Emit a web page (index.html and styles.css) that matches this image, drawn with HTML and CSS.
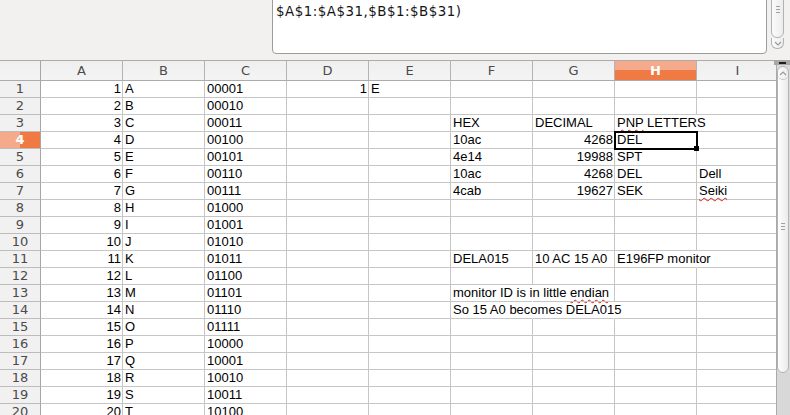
FILE: index.html
```html
<!DOCTYPE html>
<html>
<head>
<meta charset="utf-8">
<link rel="stylesheet" href="styles.css">
</head>
<body>
<div class="topbar">
  <div class="fbox"><div class="fline">$A$1:$A$31,$B$1:$B$31)</div></div>
  <div class="fscroll">
    <div class="fthumb"><span class="grip"><i></i><i></i><i></i></span></div>
    <div class="fdown"><svg width="8" height="5" viewBox="0 0 8 5"><path d="M1 1 L4 4 L7 1" fill="none" stroke="#9a9a9a" stroke-width="1.2"/></svg></div>
  </div>
</div>
<div class="sheet">
  <div class="grid">
    <div class="hrow">
      <div class="ch corner"></div><div class="ch">A</div><div class="ch">B</div><div class="ch">C</div><div class="ch">D</div><div class="ch">E</div><div class="ch">F</div><div class="ch">G</div><div class="ch hsel">H</div><div class="ch">I</div>
    </div>
    <div class="row"><div class="rh">1</div><div class="c n">1</div><div class="c">A</div><div class="c">00001</div><div class="c n">1</div><div class="c">E</div><div class="c"></div><div class="c"></div><div class="c"></div><div class="c"></div></div>
    <div class="row"><div class="rh">2</div><div class="c n">2</div><div class="c">B</div><div class="c">00010</div><div class="c"></div><div class="c"></div><div class="c"></div><div class="c"></div><div class="c"></div><div class="c"></div></div>
    <div class="row"><div class="rh">3</div><div class="c n">3</div><div class="c">C</div><div class="c">00011</div><div class="c"></div><div class="c"></div><div class="c">HEX</div><div class="c">DECIMAL</div><div class="c spill"><span class="spell">PNP</span> LETTERS</div><div class="c"></div></div>
    <div class="row"><div class="rh rsel">4</div><div class="c n">4</div><div class="c">D</div><div class="c">00100</div><div class="c"></div><div class="c"></div><div class="c">10ac</div><div class="c n">4268</div><div class="c cur">DEL</div><div class="c"></div></div>
    <div class="row"><div class="rh">5</div><div class="c n">5</div><div class="c">E</div><div class="c">00101</div><div class="c"></div><div class="c"></div><div class="c">4e14</div><div class="c n">19988</div><div class="c">SPT</div><div class="c"></div></div>
    <div class="row"><div class="rh">6</div><div class="c n">6</div><div class="c">F</div><div class="c">00110</div><div class="c"></div><div class="c"></div><div class="c">10ac</div><div class="c n">4268</div><div class="c">DEL</div><div class="c">Dell</div></div>
    <div class="row"><div class="rh">7</div><div class="c n">7</div><div class="c">G</div><div class="c">00111</div><div class="c"></div><div class="c"></div><div class="c">4cab</div><div class="c n">19627</div><div class="c">SEK</div><div class="c"><span class="spell">Seiki</span></div></div>
    <div class="row"><div class="rh">8</div><div class="c n">8</div><div class="c">H</div><div class="c">01000</div><div class="c"></div><div class="c"></div><div class="c"></div><div class="c"></div><div class="c"></div><div class="c"></div></div>
    <div class="row"><div class="rh">9</div><div class="c n">9</div><div class="c">I</div><div class="c">01001</div><div class="c"></div><div class="c"></div><div class="c"></div><div class="c"></div><div class="c"></div><div class="c"></div></div>
    <div class="row"><div class="rh">10</div><div class="c n">10</div><div class="c">J</div><div class="c">01010</div><div class="c"></div><div class="c"></div><div class="c"></div><div class="c"></div><div class="c"></div><div class="c"></div></div>
    <div class="row"><div class="rh">11</div><div class="c n">11</div><div class="c">K</div><div class="c">01011</div><div class="c"></div><div class="c"></div><div class="c">DELA015</div><div class="c">10 AC 15 A0</div><div class="c spill">E196FP monitor</div><div class="c"></div></div>
    <div class="row"><div class="rh">12</div><div class="c n">12</div><div class="c">L</div><div class="c">01100</div><div class="c"></div><div class="c"></div><div class="c"></div><div class="c"></div><div class="c"></div><div class="c"></div></div>
    <div class="row"><div class="rh">13</div><div class="c n">13</div><div class="c">M</div><div class="c">01101</div><div class="c"></div><div class="c"></div><div class="c spill">monitor ID is in little <span class="spell">endian</span></div><div class="c"></div><div class="c"></div><div class="c"></div></div>
    <div class="row"><div class="rh">14</div><div class="c n">14</div><div class="c">N</div><div class="c">01110</div><div class="c"></div><div class="c"></div><div class="c spill">So 15 A0 becomes DELA015</div><div class="c spill"></div><div class="c"></div><div class="c"></div></div>
    <div class="row"><div class="rh">15</div><div class="c n">15</div><div class="c">O</div><div class="c">01111</div><div class="c"></div><div class="c"></div><div class="c"></div><div class="c"></div><div class="c"></div><div class="c"></div></div>
    <div class="row"><div class="rh">16</div><div class="c n">16</div><div class="c">P</div><div class="c">10000</div><div class="c"></div><div class="c"></div><div class="c"></div><div class="c"></div><div class="c"></div><div class="c"></div></div>
    <div class="row"><div class="rh">17</div><div class="c n">17</div><div class="c">Q</div><div class="c">10001</div><div class="c"></div><div class="c"></div><div class="c"></div><div class="c"></div><div class="c"></div><div class="c"></div></div>
    <div class="row"><div class="rh">18</div><div class="c n">18</div><div class="c">R</div><div class="c">10010</div><div class="c"></div><div class="c"></div><div class="c"></div><div class="c"></div><div class="c"></div><div class="c"></div></div>
    <div class="row"><div class="rh">19</div><div class="c n">19</div><div class="c">S</div><div class="c">10011</div><div class="c"></div><div class="c"></div><div class="c"></div><div class="c"></div><div class="c"></div><div class="c"></div></div>
    <div class="row"><div class="rh">20</div><div class="c n">20</div><div class="c">T</div><div class="c">10100</div><div class="c"></div><div class="c"></div><div class="c"></div><div class="c"></div><div class="c"></div><div class="c"></div></div>
  </div>
  <div class="vscroll">
    <div class="split"><span></span></div>
    <div class="vthumb">
      <div class="vup"><svg width="8" height="5" viewBox="0 0 8 5"><path d="M1 4 L4 1 L7 4" fill="none" stroke="#9a9a9a" stroke-width="1.2"/></svg></div>
      <div class="vbody"><span class="grip"><i></i><i></i><i></i></span></div>
    </div>
    <div class="trough"></div>
  </div>
</div>
</body>
</html>
```

FILE: styles.css
```css
* { box-sizing: border-box; }
html, body { margin: 0; padding: 0; }
body {
  width: 790px;
  height: 415px;
  overflow: hidden;
  background: #f2f1f0;
  font-family: "Liberation Sans", Arial, sans-serif;
}

/* top formula area */
.topbar {
  height: 60px;
  display: flex;
  align-items: flex-end;
  gap: 4px;
  padding-left: 272px;
  padding-bottom: 6px;
  overflow: hidden;
  background: #f2f1f0;
}
.fbox {
  width: 495px;
  height: 70px;
  flex: none;
  background: #ffffff;
  border: 1px solid #9c9c9c;
  border-radius: 0 0 4px 4px;
  padding: 18px 0 0 3px;
}
.fline {
  font-family: "DejaVu Sans", sans-serif;
  font-size: 13.4px;
  letter-spacing: 0.5px;
  line-height: 17px;
  color: #141414;
  white-space: nowrap;
}
.fscroll {
  width: 13px;
  height: 60px;
  flex: none;
  margin-bottom: -1px;
  display: flex;
  flex-direction: column;
}
.fthumb {
  height: 49px;
  margin-top: -6px;
  border: 1px solid #b3b3b3;
  border-radius: 0 0 6px 6px;
  background: linear-gradient(to right, #fbfbfb, #ececec);
  display: flex;
  justify-content: center;
  padding-top: 16px;
}
.fdown {
  height: 11px;
  border: 1px solid #b3b3b3;
  border-top: none;
  border-radius: 0 0 6px 6px;
  background: linear-gradient(to right, #fbfbfb, #ececec);
  display: flex;
  justify-content: center;
  align-items: center;
}
.grip {
  display: flex;
  flex-direction: column;
  gap: 2px;
  width: 4px;
}
.grip i {
  display: block;
  height: 1px;
  background: #a0a0a0;
}

/* sheet */
.sheet {
  display: flex;
  height: 355px;
}
.grid {
  width: 776px;
  flex: none;
  overflow: hidden;
  background: #ffffff;
}
.hrow, .row {
  display: grid;
  grid-template-columns: 41px repeat(9, 82px);
}
.hrow {
  height: 21px;
  border-top: 1px solid #ababab;
}
.ch {
  background: linear-gradient(#efefef, #f4f4f4);
  border-right: 1px solid #b3b3b3;
  border-bottom: 1px solid #ababab;
  text-align: center;
  font-family: "DejaVu Sans", sans-serif;
  font-size: 13px;
  line-height: 19px;
  color: #4b4b4b;
}
.ch.corner { border-right-color: #a6a6a6; }
.ch.hsel {
  background: linear-gradient(#f5aa8b 0, #f5aa8b 48%, #ef7a43 48%, #ef7a43 100%);
  color: #ffffff;
  font-weight: bold;
}
.row { height: 17px; }
.rh {
  background: #f1f1f1;
  border-right: 1px solid #a6a6a6;
  border-bottom: 1px solid #bdbdbd;
  text-align: center;
  font-family: "DejaVu Sans", sans-serif;
  font-size: 13px;
  line-height: 16px;
  color: #4b4b4b;
}
.rh.rsel {
  background: linear-gradient(to right, #f5aa8b 0, #f5aa8b 50%, #ef7a43 50%, #ef7a43 100%);
  color: #ffffff;
  font-weight: bold;
}
.c {
  border-right: 1px solid #c6c6c6;
  border-bottom: 1px solid #c6c6c6;
  font-family: "Liberation Sans", Arial, sans-serif;
  font-size: 13px;
  line-height: 16px;
  color: #000000;
  padding: 0 1px 0 2px;
  white-space: nowrap;
  overflow: visible;
}
.c.n { text-align: right; padding-right: 1px; }
.c.spill { border-right-color: transparent; }
.c.cur { position: relative; }
.c.cur::before {
  content: "";
  position: absolute;
  left: -1px;
  top: -1px;
  right: -2px;
  bottom: -2px;
  border: 2px solid #000000;
}
.c.cur::after {
  content: "";
  position: absolute;
  right: -3px;
  bottom: -3px;
  width: 5px;
  height: 5px;
  background: #000000;
}
.spell {
  text-decoration: underline wavy #e01b1b;
  text-decoration-thickness: 1px;
  text-underline-offset: 2px;
}

/* vertical scrollbar */
.vscroll {
  width: 14px;
  flex: none;
  display: flex;
  flex-direction: column;
  background: #dadada;
  border-left: 1px solid #a9a9a9;
}
.split {
  height: 5px;
  background: #a7a7a7;
  display: flex;
  justify-content: center;
  align-items: center;
  margin-left: -3px;
}
.split span {
  display: block;
  width: 7px;
  height: 2px;
  background: #1e1e1e;
}
.vthumb {
  height: 307px;
  margin: 1px 1px 0 0;
  border: 1px solid #b3b3b3;
  border-radius: 6px;
  background: linear-gradient(to right, #fdfdfd, #ebebeb);
  display: flex;
  flex-direction: column;
}
.vup {
  height: 13px;
  border-bottom: 1px solid #c2c2c2;
  border-radius: 0 0 6px 6px;
  display: flex;
  justify-content: center;
  align-items: center;
  padding-top: 1px;
}
.vbody {
  flex: 1;
  display: flex;
  justify-content: center;
  align-items: center;
}
.trough { flex: 1; background: #d8d8d8; }
```
